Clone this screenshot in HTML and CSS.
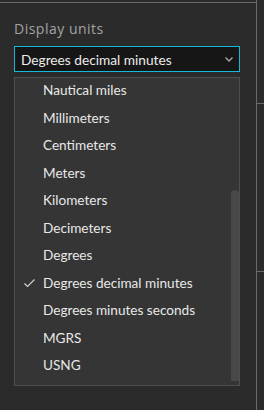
FILE: index.html
```html
<!DOCTYPE html>
<html>
<head>
<meta charset="utf-8">
<link rel="stylesheet" href="styles.css">
</head>
<body>
<div class="panel">
  <div class="panel-inner">
    <div class="label">Display units</div>
    <div class="select">
      <span class="select-text">Degrees decimal minutes</span>
      <svg class="chevron" width="8" height="5" viewBox="0 0 8 5"><path d="M0.5 0.5 L4 4 L7.5 0.5" fill="none" stroke="#a8a8a8" stroke-width="1.3"/></svg>
    </div>
    <div class="menu">
      <div class="item">Nautical miles</div>
      <div class="item">Millimeters</div>
      <div class="item">Centimeters</div>
      <div class="item">Meters</div>
      <div class="item">Kilometers</div>
      <div class="item">Decimeters</div>
      <div class="item">Degrees</div>
      <div class="item selected"><svg class="check" width="11" height="10" viewBox="0 0 11 10"><path d="M0.5 5.5 L3.5 8.5 L10.5 1.5" fill="none" stroke="#d8d8d8" stroke-width="1.1"/></svg>Degrees decimal minutes</div>
      <div class="item">Degrees minutes seconds</div>
      <div class="item">MGRS</div>
      <div class="item">USNG</div>
      <div class="thumb"></div>
    </div>
  </div>
</div>
<div class="side">
  <div class="side-a"></div>
  <div class="side-b"></div>
</div>
</body>
</html>
```
FILE: styles.css
```css
html, body {
  margin: 0;
  padding: 0;
}
body {
  width: 264px;
  height: 410px;
  background: #2b2b2b;
  display: flex;
  overflow: hidden;
  font-family: Lato, "Noto Sans", sans-serif;
  color: #e6e6e6;
}
.panel {
  width: 256px;
  height: 410px;
  border-right: 1px solid #6a6a6a;
  box-sizing: content-box;
}
.panel-inner {
  margin-top: 2px;
  border-top: 1px solid #6a6a6a;
  padding: 18px 0 0 14px;
}
.label {
  font-family: "Open Sans", Lato, sans-serif;
  font-size: 14px;
  letter-spacing: 0.5px;
  line-height: 16px;
  color: #a3a3a3;
  height: 16px;
}
.select {
  margin-top: 9px;
  width: 226px;
  height: 26px;
  box-sizing: border-box;
  border: 1px solid #14b9d9;
  background: #161616;
  display: flex;
  align-items: center;
  padding: 0 6px 0 6px;
}
.select-text {
  flex: 1;
  font-size: 13.7px;
  color: #ececec;
}
.chevron {
  display: block;
}
.menu {
  position: relative;
  margin-top: 5px;
  width: 226px;
  height: 309px;
  box-sizing: border-box;
  background: #353535;
  border: 1px solid #4e4e4e;
  overflow: hidden;
}
.item {
  height: 27.5px;
  box-sizing: border-box;
  padding-bottom: 3px;
  display: flex;
  align-items: center;
  padding-left: 28px;
  font-size: 13.6px;
  color: #e8e8e8;
  position: relative;
}
.check {
  position: absolute;
  left: 9px;
  top: 7px;
}
.thumb {
  position: absolute;
  left: 216px;
  top: 112px;
  width: 8px;
  height: 191px;
  background: #484848;
  border-radius: 4px 4px 0 0;
}
.side {
  flex: 1;
}
.side-a {
  height: 103px;
  border-bottom: 1px solid #6a6a6a;
}
.side-b {
  height: 167px;
  border-bottom: 1px solid #6a6a6a;
}
```
